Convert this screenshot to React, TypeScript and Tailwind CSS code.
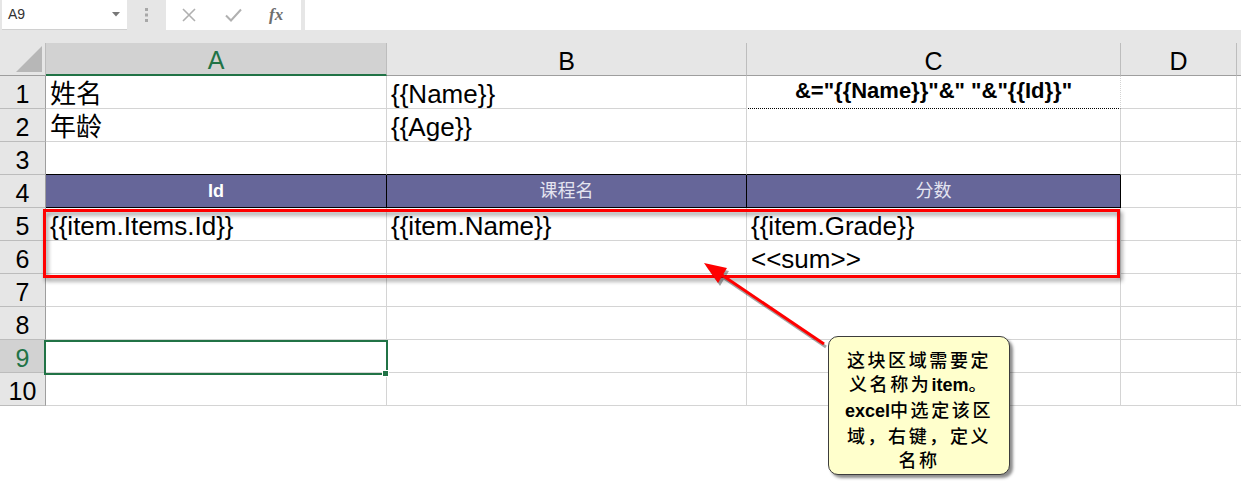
import React from 'react';

const LINE = 'border-[#d4d4d4]';

function RowHead({ n, active }: { n: number; active?: boolean }) {
  return (
    <div
      className={`h-[33px] flex items-end justify-center pb-[1px] text-[25px] leading-none border-b border-r border-b-[#bcbcbc] ${
        active ? 'bg-[#d2d2d2] text-[#217346] border-r-[#9e9e9e]' : 'bg-[#e6e6e6] text-black border-r-[#9e9e9e]'
      }`}
    >
      {n}
    </div>
  );
}

function Cell({ children, bottom = LINE }: { children?: React.ReactNode; bottom?: string }) {
  return (
    <div className={`relative h-[33px] flex items-end pl-[4px] pb-[1px] text-[26px] leading-none whitespace-nowrap border-r border-r-[#d4d4d4] border-b ${bottom}`}>
      {children}
    </div>
  );
}

function HeadCell({ children, first }: { children: React.ReactNode; first?: boolean }) {
  return (
    <div
      className={`h-[33px] flex items-center justify-center bg-[#666699] text-[18px] leading-none border-r border-b border-black ${
        first ? 'text-white font-bold' : 'text-[#e4e4f0]'
      }`}
    >
      {children}
    </div>
  );
}

function ColHead({ label, active }: { label: string; active?: boolean }) {
  return (
    <div
      className={`h-[33px] flex items-end justify-center pb-[1px] text-[25px] leading-none border-r border-r-[#bdbdbd] ${
        active ? 'bg-[#d2d2d2] text-[#217346] border-b-2 border-b-[#217346]' : 'bg-[#e6e6e6] text-black border-b border-b-[#9e9e9e]'
      }`}
    >
      {label}
    </div>
  );
}

function FormulaBar() {
  return (
    <div className="flex h-[30px] bg-[#e6e6e6]">
      <div className="ml-[2px] w-[125px] bg-white border-b border-[#d0d0d0] flex items-center justify-between pl-[6px] pr-[7px]">
        <span className="text-[14px] text-[#333]">A9</span>
        <svg width="8" height="5" viewBox="0 0 8 5">
          <path d="M0 0 H8 L4 4.5 Z" fill="#777" />
        </svg>
      </div>
      <div className="w-[39px] flex items-center justify-center">
        <svg width="3" height="14" viewBox="0 0 3 14">
          <rect x="0" y="0" width="3" height="3" fill="#a8a8a8" />
          <rect x="0" y="5.5" width="3" height="3" fill="#a8a8a8" />
          <rect x="0" y="11" width="3" height="3" fill="#a8a8a8" />
        </svg>
      </div>
      <div className="w-[135px] bg-white flex items-center">
        <svg className="ml-[16px]" width="14" height="14" viewBox="0 0 14 14">
          <path d="M1 1 L13 13 M13 1 L1 13" stroke="#b0b0b0" strokeWidth="1.6" />
        </svg>
        <svg className="ml-[29px]" width="17" height="14" viewBox="0 0 17 14">
          <path d="M1 7.5 L6 12.5 L16 1.5" stroke="#b0b0b0" strokeWidth="2" fill="none" />
        </svg>
        <span className="ml-[27px] font-['Liberation_Serif',serif] italic font-bold text-[17px] text-[#6e6e6e]">fx</span>
      </div>
      <div className="w-[4px]" />
      <div className="flex-1 bg-white" />
    </div>
  );
}

export default function App() {
  const rows = [1, 2, 3, 4, 5, 6, 7, 8, 9, 10];

  const rowCells = (r: number) => {
    if (r === 4) {
      return [
        <HeadCell key="a" first>Id</HeadCell>,
        <HeadCell key="b">课程名</HeadCell>,
        <HeadCell key="c">分数</HeadCell>,
      ];
    }
    const b3 = r === 3 ? 'border-b-black' : 'border-b-[#d4d4d4]';
    let a: React.ReactNode = null;
    let b: React.ReactNode = null;
    let c: React.ReactNode = null;
    if (r === 1) {
      a = '姓名';
      b = '{{Name}}';
    }
    if (r === 2) {
      a = '年龄';
      b = '{{Age}}';
    }
    if (r === 5) {
      a = '{{item.Items.Id}}';
      b = '{{item.Name}}';
      c = '{{item.Grade}}';
    }
    if (r === 6) c = '<<sum>>';
    return [
      <Cell key="a" bottom={b3}>{a}</Cell>,
      <Cell key="b" bottom={b3}>{b}</Cell>,
      r === 1 ? (
        <div key="c" className="h-[33px] flex items-end justify-center pb-[6px] border-l border-dotted border-l-black border-b border-b-black border-r border-r-[#d4d4d4] -ml-px">
          <span className="text-[22px] font-bold leading-none">{'&="{{Name}}"&" "&"{{Id}}"'}</span>
        </div>
      ) : (
        <Cell key="c" bottom={b3}>{c}</Cell>
      ),
    ];
  };

  return (
    <div className="relative w-[1241px] h-[492px] overflow-hidden bg-white text-black font-['Liberation_Sans','Noto_Sans_CJK_SC',sans-serif]">
      <FormulaBar />
      <div className="h-[13px] bg-[#e6e6e6]" />

      <div className="grid grid-cols-[46px_341px_360px_374px_116px_1fr]">
        <div className="relative h-[33px] bg-[#e6e6e6] border-r border-b border-r-[#bdbdbd] border-b-[#9e9e9e]">
          <svg className="absolute right-[3px] bottom-[3px]" width="26" height="26" viewBox="0 0 26 26">
            <path d="M26 0 L26 26 L0 26 Z" fill="#b7b7b7" />
          </svg>
        </div>
        <ColHead label="A" active />
        <ColHead label="B" />
        <ColHead label="C" />
        <ColHead label="D" />
        <div className="h-[33px] bg-[#e6e6e6] border-b border-b-[#9e9e9e]" />

        {rows.map((r) => (
          <React.Fragment key={r}>
            <RowHead n={r} active={r === 9} />
            {rowCells(r)}
            <Cell />
            <div className="h-[33px] border-b border-[#d4d4d4]" />
          </React.Fragment>
        ))}
      </div>

      {/* selected cell A9 */}
      <div className="absolute left-[44px] top-[340px] w-[344px] h-[35px] border-2 border-[#217346]" />
      <div className="absolute left-[382px] top-[370px] w-[7px] h-[7px] bg-[#217346] border border-white" />

      {/* red frame around the named range */}
      <div className="absolute left-[43px] top-[209px] w-[1077px] h-[69px] border-[3px] border-[#ff0000] drop-shadow-[2px_3px_2px_rgba(0,0,0,0.45)]" />

      {/* arrow */}
      <svg className="absolute inset-0 pointer-events-none" width="1241" height="492" viewBox="0 0 1241 492">
        <g opacity="0.35" transform="translate(2 3)">
          <line x1="824" y1="344" x2="716" y2="271" stroke="#000" strokeWidth="3" />
          <polygon points="704,263 727,268 718,283" fill="#000" />
        </g>
        <line x1="824" y1="344" x2="716" y2="271" stroke="#ff0000" strokeWidth="3" />
        <polygon points="704,263 727,268 718,283" fill="#ff0000" />
      </svg>

      {/* callout */}
      <div className="absolute left-[828px] top-[336px] w-[182px] h-[139px] rounded-[10px] border border-[#3c3c3c] bg-[#ffffcc] shadow-[3px_3px_3px_rgba(0,0,0,0.45)] pt-[10px] flex flex-col items-center text-[18px] leading-[24px] font-['Noto_Sans_CJK_SC',sans-serif] font-medium text-black">
        <div className="tracking-[2.6px]">这块区域需要定</div>
        <div className="tracking-[2.6px]">
          义名称为<b className="tracking-normal font-['Liberation_Sans',sans-serif] font-bold">item</b>。
        </div>
        <div className="tracking-[2.6px]">
          <b className="tracking-normal font-['Liberation_Sans',sans-serif] font-bold">excel</b>中选定该区
        </div>
        <div className="tracking-[2.6px]">域，右键，定义</div>
        <div className="tracking-[2.6px]">名称</div>
      </div>
    </div>
  );
}
